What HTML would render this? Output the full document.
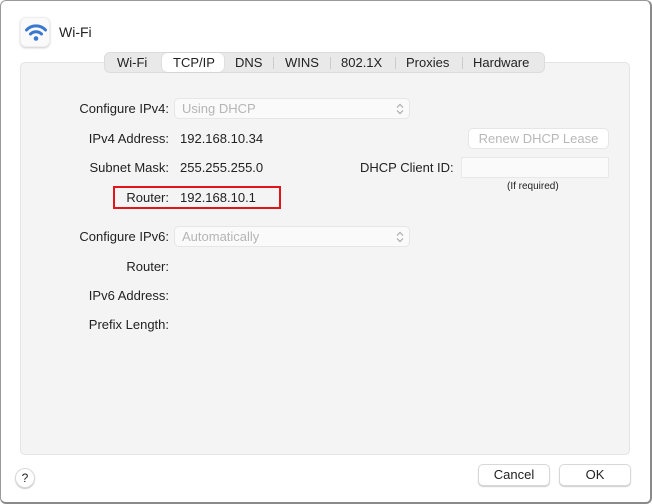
<!DOCTYPE html>
<html><head><style>
*{margin:0;padding:0;box-sizing:border-box}
body{width:652px;height:504px;background:#fff;font-family:"Liberation Sans",sans-serif;font-size:13px;color:#222;position:relative;overflow:hidden}
.win{position:absolute;left:0;top:0;width:652px;height:504px;border:1px solid #9a9a9a;border-right:2px solid #8a8a8a;border-bottom:2px solid #8a8a8a;border-radius:6px;background:#fff}
.a{position:absolute;white-space:nowrap}
.lbl{position:absolute;right:483px;white-space:nowrap;text-align:right}
.val{position:absolute;left:180px;white-space:nowrap}
.panel{position:absolute;left:20px;top:62px;width:610px;height:393px;background:#f4f4f4;border:1px solid #e4e4e4;border-radius:5px}
.tabs{position:absolute;left:104px;top:52px;width:441px;height:21px;background:#e9e9e9;border:1px solid #dcdcdc;border-radius:6px}
.t{position:absolute;top:2px;line-height:16px;white-space:nowrap}
.sel{position:absolute;left:57px;top:0px;width:62px;height:19px;background:#fff;border-radius:5px;box-shadow:0 0 1px #aaa}
.sep{position:absolute;top:4px;width:1px;height:12px;background:#ccc}
.pop{position:absolute;left:174px;width:236px;height:21px;background:#fafafa;border:1px solid #e6e6e6;border-radius:5px;color:#b5b5b5;padding-left:7px;line-height:19px}
.pop svg{position:absolute;right:5px;top:4px}
.btn{position:absolute;background:#fff;border:1px solid #d8d8d8;border-radius:5px;text-align:center;box-shadow:0 1px 1px #ccc}
</style></head><body>
<div class="win"></div>
<div class="a" style="left:20px;top:17px;width:30px;height:30px;background:#fafafa;border:1px solid #eee;border-radius:6px;box-shadow:0 1px 2px #ccc">
<svg width="30" height="30" viewBox="0 0 30 30"><g fill="none" stroke="#3a78d0" stroke-width="3" stroke-linecap="round"><path d="M5.5 12 A13 13 0 0 1 24.5 12"/><path d="M9.5 16 A8 8 0 0 1 20.5 16"/></g><circle cx="15" cy="20.5" r="2.3" fill="#3a78d0"/></svg></div>
<div class="a" style="left:59px;top:24px;font-size:14px">Wi-Fi</div>
<div class="panel"></div>
<div class="tabs">
<div class="sel"></div>
<div class="t" style="left:12px">Wi-Fi</div>
<div class="t" style="left:68px">TCP/IP</div>
<div class="t" style="left:130px">DNS</div>
<div class="sep" style="left:168px"></div>
<div class="t" style="left:180px">WINS</div>
<div class="sep" style="left:225px"></div>
<div class="t" style="left:236px">802.1X</div>
<div class="sep" style="left:290px"></div>
<div class="t" style="left:301px">Proxies</div>
<div class="sep" style="left:357px"></div>
<div class="t" style="left:368px">Hardware</div>
</div>
<div class="lbl" style="top:101px">Configure IPv4:</div>
<div class="pop" style="top:98px">Using DHCP<svg width="8" height="12" viewBox="0 0 8 12"><path d="M1 4.5 L4 1.5 L7 4.5 M1 7.5 L4 10.5 L7 7.5" fill="none" stroke="#aaa" stroke-width="1.2"/></svg></div>
<div class="lbl" style="top:131px">IPv4 Address:</div><div class="val" style="top:131px">192.168.10.34</div>
<div class="lbl" style="top:160px">Subnet Mask:</div><div class="val" style="top:160px">255.255.255.0</div>
<div class="lbl" style="top:190px">Router:</div><div class="val" style="top:190px">192.168.10.1</div>
<div class="a" style="left:113px;top:186px;width:168px;height:23px;border:2px solid #e0141a"></div>
<div class="btn" style="left:468px;top:128px;width:141px;height:21px;line-height:19px;color:#b8b8b8;box-shadow:none;border-color:#e6e6e6">Renew DHCP Lease</div>
<div class="a" style="left:360px;top:160px">DHCP Client ID:</div>
<div class="a" style="left:461px;top:157px;width:148px;height:21px;background:#fafafa;border:1px solid #e8e8e8"></div>
<div class="a" style="left:507px;top:181px;font-size:10px">(If required)</div>
<div class="lbl" style="top:229px">Configure IPv6:</div>
<div class="pop" style="top:226px">Automatically<svg width="8" height="12" viewBox="0 0 8 12"><path d="M1 4.5 L4 1.5 L7 4.5 M1 7.5 L4 10.5 L7 7.5" fill="none" stroke="#aaa" stroke-width="1.2"/></svg></div>
<div class="lbl" style="top:259px">Router:</div>
<div class="lbl" style="top:288px">IPv6 Address:</div>
<div class="lbl" style="top:317px">Prefix Length:</div>
<div class="btn" style="left:15px;top:468px;width:20px;height:20px;border-radius:10px;line-height:18px;font-size:12px">?</div>
<div class="btn" style="left:478px;top:464px;width:72px;height:22px;line-height:20px">Cancel</div>
<div class="btn" style="left:559px;top:464px;width:72px;height:22px;line-height:20px">OK</div>
</body></html>
